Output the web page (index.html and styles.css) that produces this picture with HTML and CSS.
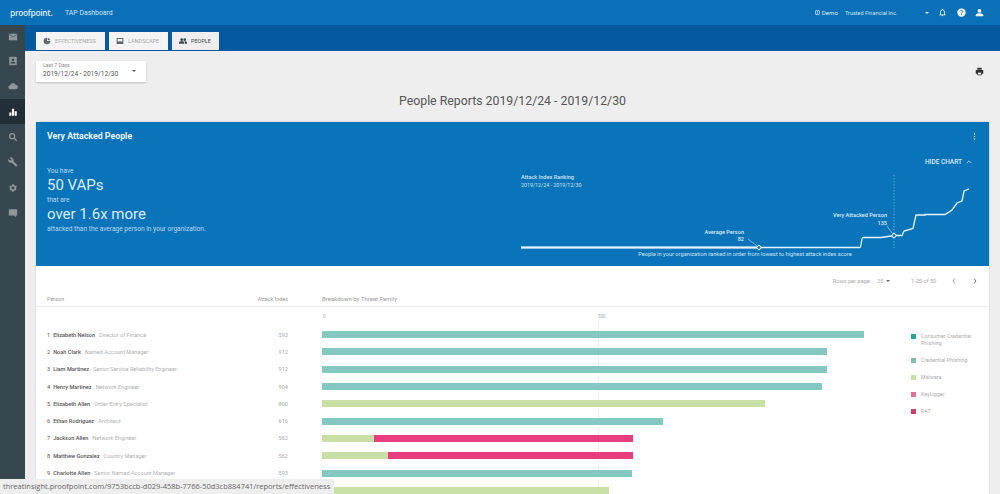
FILE: index.html
```html
<!DOCTYPE html>
<html lang="en">
<head>
<meta charset="utf-8">
<title>TAP Dashboard</title>
<link rel="stylesheet" href="styles.css">
</head>
<body>
<div class="app">
  <header class="topbar">
    <div class="brand">proofpoint<span class="dot">.</span></div>
    <div class="apptitle">TAP Dashboard</div>
    <div class="spacer"></div>
    <div class="demo">
      <svg class="demo-ico" viewBox="0 0 10 10"><rect x="1.5" y="1.5" width="7" height="7" fill="none" stroke="#fff" stroke-width="1.2"/><path d="M4 3h2M4 5h2M4 7h2" stroke="#fff"/></svg>
      Demo
    </div>
    <div class="org">Trusted Financial Inc.</div>
    <svg class="caret" viewBox="0 0 8 4"><path d="M0 0h8L4 4z" fill="#e6f0f8"/></svg>
    <svg class="tico bell" viewBox="0 0 24 24"><path d="M12 2a2 2 0 0 0-2 2v.6C7 5.500 6 8 6 11v5l-2 2v1h16v-1l-2-2v-5c0-3-1-5.500-4-6.400V4a2 2 0 0 0-2-2zm-4 15v-6c0-3 1.500-4.800 4-4.800s4 1.800 4 4.800v6zm2 3a2 2 0 0 0 4 0z" fill="#fff"/></svg>
    <svg class="tico help" viewBox="0 0 24 24"><circle cx="12" cy="12" r="11" fill="#fff"/><path d="M8.500 9.500a3.500 3.500 0 1 1 5.500 2.800c-1.200.9-2 1.400-2 3" fill="none" stroke="#0a70b8" stroke-width="2.400"/><rect x="10.800" y="16.500" width="2.400" height="2.400" fill="#0a70b8"/></svg>
    <svg class="tico user" viewBox="0 0 24 24"><circle cx="12" cy="7.500" r="5" fill="#fff"/><path d="M2 22v-3c0-3.500 6.500-5 10-5s10 1.500 10 5v3z" fill="#fff"/></svg>
  </header>
  <div class="body">
    <nav class="rail">
      <a class="rail-item"><svg viewBox="0 0 24 24"><path d="M2 4h20v16H2z" fill="#8d979c"/><path d="M3 6l9 6 9-6" fill="none" stroke="#37474f" stroke-width="1.600"/></svg></a>
      <a class="rail-item"><svg viewBox="0 0 24 24"><path d="M3 2h18v20H3z" fill="#8d979c"/><circle cx="12" cy="9" r="3.200" fill="#37474f"/><path d="M6 18c0-3 3-4 6-4s6 1 6 4z" fill="#37474f"/></svg></a>
      <a class="rail-item"><svg viewBox="0 0 24 24"><path d="M6 20a5 5 0 0 1-1-9.900A7 7 0 0 1 18 9a5.500 5.500 0 0 1 .5 11z" fill="#8d979c"/></svg></a>
      <a class="rail-item active"><svg viewBox="0 0 24 24"><path d="M3 13h5v8H3zM9.500 4h5v17h-5zM16 10h5v11h-5z" fill="#fff"/></svg></a>
      <a class="rail-item"><svg viewBox="0 0 24 24"><circle cx="10" cy="10" r="6" fill="none" stroke="#8d979c" stroke-width="3"/><path d="M14.500 14.500L21 21" stroke="#8d979c" stroke-width="3.200"/></svg></a>
      <a class="rail-item"><svg viewBox="0 0 24 24"><path d="M22 19l-9-9c1-2.500.4-5.300-1.700-7.300C9.200.6 6.200.3 3.800 1.400l4.300 4.300-3 3-4.400-4.300C-.4 6.800.1 9.900 2.200 12c2 2 4.800 2.600 7.200 1.600l9 9c.4.4 1 .4 1.400 0l2.200-2.200c.5-.4.5-1 0-1.400z" fill="#8d979c"/></svg></a>
      <a class="rail-item"><svg viewBox="0 0 24 24"><path d="M19.400 13a7.500 7.500 0 0 0 0-2l2.100-1.600-2-3.500-2.500 1a7.500 7.500 0 0 0-1.700-1L13.900 3.200h-4l-.4 2.700a7.500 7.500 0 0 0-1.700 1l-2.500-1-2 3.500L5.400 11a7.500 7.500 0 0 0 0 2l-2.100 1.600 2 3.500 2.500-1a7.500 7.500 0 0 0 1.700 1l.4 2.700h4l.4-2.700a7.500 7.500 0 0 0 1.700-1l2.500 1 2-3.500zM12 15.500a3.500 3.500 0 1 1 0-7 3.500 3.500 0 0 1 0 7z" fill="#8d979c"/></svg></a>
      <a class="rail-item"><svg viewBox="0 0 24 24"><path d="M2 3h20v15h-3v4l-4-4H2z" fill="#8d979c"/></svg></a>
    </nav>
    <main class="main">
      <div class="tabbar">
        <div class="tab"><svg viewBox="0 0 24 24"><path d="M12 2a10 10 0 1 0 10 10h-10z" fill="#5f6a70"/><path d="M14 2v8h8a10 10 0 0 0-8-8z" fill="#5f6a70"/></svg>EFFECTIVENESS</div>
        <div class="tab"><svg viewBox="0 0 24 24"><path d="M2 3h20v18H2z" fill="#5f6a70"/><path d="M5 6h14v7H5z" fill="#fff"/></svg>LANDSCAPE</div>
        <div class="tab current"><svg viewBox="0 0 24 24"><circle cx="8" cy="8" r="4" fill="#37474f"/><circle cx="17" cy="8" r="4" fill="#37474f"/><path d="M0 20v-3c0-2.500 5-4 8-4s8 1.500 8 4v3zM17.500 13c3 0 6.500 1.500 6.500 4v3h-6v-3c0-1.500-.5-3-2-3.800z" fill="#37474f"/></svg>PEOPLE</div>
      </div>
      <div class="content">
        <div class="filterrow">
          <div class="datecard">
            <div class="datelabel">Last 7 Days</div>
            <div class="datevalue">2019/12/24 - 2019/12/30</div>
            <svg class="datecaret" viewBox="0 0 8 4"><path d="M0 0h8L4 4z" fill="#555"/></svg>
          </div>
          <svg class="print" viewBox="0 0 24 24"><path d="M6 2h12v5H6zM2 8h20v10h-4v4H6v-4H2z" fill="#333"/><path d="M8 15h8v5H8z" fill="#eee"/></svg>
        </div>
        <h1 class="pagetitle">People Reports 2019/12/24 - 2019/12/30</h1>
        <section class="card">
          <div class="hero">
            <div class="herohead">
              <div class="herotitle">Very Attacked People</div>
              <svg class="more" viewBox="0 0 4 14"><circle cx="2" cy="2" r="1.300" fill="#fff"/><circle cx="2" cy="7" r="1.300" fill="#fff"/><circle cx="2" cy="12" r="1.300" fill="#fff"/></svg>
            </div>
            <div class="herobody">
              <div class="summary">
                <div class="sm">You have</div>
                <div class="big">50 VAPs</div>
                <div class="sm">that are</div>
                <div class="big">over 1.6x more</div>
                <div class="sm">attacked than the average person in your organization.</div>
              </div>
              <div class="chartwrap">
                <div class="hidechart">HIDE CHART <svg viewBox="0 0 10 6"><path d="M1 5l4-4 4 4" fill="none" stroke="#cfe3f2" stroke-width="1.300"/></svg></div>
                <div class="charthead"><b>Attack Index Ranking</b><span>2019/12/24 - 2019/12/30</span></div>
                <svg class="chart" viewBox="0 0 470 100">
                  <path d="M373 9V82" stroke="#5ea6d8" stroke-width="1" stroke-dasharray="1.500 1.500" fill="none"/>
                  <path d="M0 81.500H339c1.500 0 1-10 3-10H360L373 69.500H381L383 65 392 62.500 395 49H404V48.500H424L431 44 436 37 441 35 443 25 448 23" fill="none" stroke="#e8f4fb" stroke-width="1.300"/>
                  <path d="M0 81.500H238" fill="none" stroke="#e8f4fb" stroke-width="1.800"/>
                  <path d="M227 73l9 7M366 60l5 7" stroke="#a9d0ea" stroke-width=".7"/>
                  <circle cx="238" cy="81.500" r="2" fill="#0a74bb" stroke="#fff" stroke-width="1"/>
                  <circle cx="373" cy="69.500" r="2" fill="#0a74bb" stroke="#fff" stroke-width="1"/>
                  <text class="ct" x="223" y="67.500" text-anchor="end">Average Person</text>
                  <text class="ct" x="223" y="74.500" text-anchor="end">82</text>
                  <text class="ct" x="366" y="51" text-anchor="end">Very Attacked Person</text>
                  <text class="ct" x="366" y="59" text-anchor="end">135</text>
                </svg>
                <div class="chartcaption">People in your organization ranked in order from lowest to highest attack index score</div>
              </div>
            </div>
          </div>
          <div class="pager">
            <span>Rows per page:</span><span class="rpp">25 <svg viewBox="0 0 8 4"><path d="M0 0h8L4 4z" fill="#666"/></svg></span><span class="range">1-25 of 50</span>
            <svg class="pg" viewBox="0 0 8 12"><path d="M6 1L2 6l4 5" fill="none" stroke="#777" stroke-width="1.400"/></svg>
            <svg class="pg" viewBox="0 0 8 12"><path d="M2 1l4 5-4 5" fill="none" stroke="#333" stroke-width="1.400"/></svg>
          </div>
          <div class="thead">
            <div class="c-person">Person</div>
            <div class="c-index">Attack Index</div>
            <div class="c-break">Breakdown by Threat Family</div>
          </div>
          <div class="tbody">
            <div class="rows">
              <div class="axis"><span>0</span><span class="ax500">500</span></div>
              <div class="gridline"></div>
              <div class="row"><div class="c-person"><span class="n">1</span><b>Elizabeth Nelson</b><span class="job">Director of Finance</span></div><div class="c-index">593</div><div class="c-bar"><i class="teal" style="width:542px"></i></div></div>
              <div class="row"><div class="c-person"><span class="n">2</span><b>Noah Clark</b><span class="job">Named Account Manager</span></div><div class="c-index">912</div><div class="c-bar"><i class="teal" style="width:505px"></i></div></div>
              <div class="row"><div class="c-person"><span class="n">3</span><b>Liam Martinez</b><span class="job">Senior Service Reliability Engineer</span></div><div class="c-index">912</div><div class="c-bar"><i class="teal" style="width:505px"></i></div></div>
              <div class="row"><div class="c-person"><span class="n">4</span><b>Henry Martinez</b><span class="job">Network Engineer</span></div><div class="c-index">904</div><div class="c-bar"><i class="teal" style="width:500px"></i></div></div>
              <div class="row"><div class="c-person"><span class="n">5</span><b>Elizabeth Allen</b><span class="job">Order Entry Specialist</span></div><div class="c-index">800</div><div class="c-bar"><i class="green" style="width:443px"></i></div></div>
              <div class="row"><div class="c-person"><span class="n">6</span><b>Ethan Rodriguez</b><span class="job">Architect</span></div><div class="c-index">616</div><div class="c-bar"><i class="teal" style="width:341px"></i></div></div>
              <div class="row"><div class="c-person"><span class="n">7</span><b>Jackson Allen</b><span class="job">Network Engineer</span></div><div class="c-index">562</div><div class="c-bar"><i class="green" style="width:52px"></i><i class="pink" style="width:259px"></i></div></div>
              <div class="row"><div class="c-person"><span class="n">8</span><b>Matthew Gonzalez</b><span class="job">Country Manager</span></div><div class="c-index">562</div><div class="c-bar"><i class="green" style="width:66px"></i><i class="pink" style="width:245px"></i></div></div>
              <div class="row"><div class="c-person"><span class="n">9</span><b>Charlotte Allen</b><span class="job">Senior Named Account Manager</span></div><div class="c-index">593</div><div class="c-bar"><i class="teal" style="width:310px"></i></div></div>
              <div class="row"><div class="c-person"></div><div class="c-index"></div><div class="c-bar"><i class="green" style="width:287px"></i></div></div>
            </div>
            <aside class="legend">
              <div class="lg"><i class="s-cyan"></i><span>Consumer Credential Phishing</span></div>
              <div class="lg"><i class="s-teal"></i><span>Credential Phishing</span></div>
              <div class="lg"><i class="s-green"></i><span>Malware</span></div>
              <div class="lg"><i class="s-pink"></i><span>Keylogger</span></div>
              <div class="lg"><i class="s-rat"></i><span>RAT</span></div>
            </aside>
          </div>
        </section>
      </div>
    </main>
  </div>
  <div class="statuslink">threatinsight.proofpoint.com/9753bccb-d029-458b-7766-50d3cb884741/reports/effectiveness</div>
</div>
</body>
</html>
```
FILE: styles.css
```css
* { box-sizing: border-box; }
html, body { margin: 0; height: 100%; overflow: hidden; }
body { font-family: Roboto, "Liberation Sans", sans-serif; color: #333; background: #eee; }
.app { position: relative; width: 1000px; height: 494px; overflow: hidden; display: flex; flex-direction: column; }

.topbar { flex: 0 0 25px; height: 25px; background: #0a70b8; color: #fff; display: flex; align-items: center; padding-left: 10px; }
.brand { font-family: "Open Sans", sans-serif; font-size: 8.400px; font-weight: 600; color: #dcebf6; width: 55px; letter-spacing: -.3px; }
.dot { color: #dcebf6; }
.apptitle { font-size: 6.900px; color: #cfe3f2; }
.spacer { flex: 1; }
.demo { display: flex; align-items: center; gap: 2px; font-size: 6.200px; color: #dcebf6; }
.demo-ico { width: 5px; height: 5px; }
.org { margin-left: 7px; font-size: 5.500px; color: #cfe3f2; width: 80px; }
.caret { width: 4px; height: 2px; }
.tico { display: block; }
.bell { width: 9px; height: 9px; margin-left: 9px; }
.help { width: 9px; height: 9px; margin-left: 10px; }
.user { width: 9px; height: 9px; margin-left: 9px; margin-right: 16px; }

.body { flex: 1; display: flex; min-height: 0; }
.rail { flex: 0 0 25px; background: #37474f; display: flex; flex-direction: column; }
.rail-item { height: 25.300px; display: flex; align-items: center; justify-content: center; }
.rail-item:first-child { height: 23.500px; }
.rail-item svg { width: 10px; height: 10px; }
.rail-item.active { background: #232f36; }

.main { flex: 1; min-width: 0; display: flex; flex-direction: column; }
.tabbar { flex: 0 0 26px; height: 26px; background: #04599f; display: flex; align-items: flex-end; padding: 0 0 1px 11px; gap: 4px; }
.tab { height: 18px; background: #f4f4f4; display: flex; align-items: center; gap: 4px; padding: 0 7px; font-size: 5.500px; color: #aaa; }
.tab svg { width: 8px; height: 8px; }
.tab:nth-child(1) { width: 69px; }
.tab:nth-child(2) { width: 59px; }
.tab.current { width: 47px; background: #eee; color: #444; }

.content { flex: 1; min-height: 0; padding: 10px 0 0 11px; }
.filterrow { display: flex; justify-content: space-between; align-items: flex-start; height: 22px; }
.datecard { position: relative; width: 110px; height: 21px; background: #fff; padding: 2px 7px; box-shadow: 0 1px 2px rgba(0,0,0,.2); }
.datelabel { font-size: 5.200px; color: #888; line-height: 5px; }
.datevalue { font-size: 6.600px; color: #555; line-height: 9px; margin-top: 2px; }
.datecaret { position: absolute; right: 10px; top: 9px; width: 4px; height: 2px; }
.print { width: 9px; height: 9px; margin: 6px 16px 0 0; }
.pagetitle { margin: 11px 0 0; height: 28px; text-align: center; font-weight: 400; font-size: 12.300px; line-height: 15px; color: #555; width: 953px; }

.card { width: 953px; background: #fff; box-shadow: 0 0 2px rgba(0,0,0,.15); }
.hero { height: 144px; background: #0a74bb; color: #fff; padding: 8px 10px 0 11px; }
.herohead { display: flex; justify-content: space-between; align-items: center; height: 12px; }
.herotitle { font-size: 8.800px; font-weight: 700; color: #e8f3fb; }
.more { width: 3px; height: 7px; margin-right: 3px; }
.herobody { display: flex; }
.summary { width: 475px; padding-top: 25px; }
.sm { font-size: 6.600px; line-height: 8px; color: #b9d8ef; }
.big { font-size: 15px; line-height: 21px; color: #dcebf6; }
.chartwrap { position: relative; flex: 1; height: 122px; }
.hidechart { position: absolute; right: 7px; top: 16px; font-size: 6.500px; font-weight: 500; color: #dcebf6; display: flex; align-items: center; gap: 4px; }
.hidechart svg { width: 6px; height: 4px; }
.charthead { position: absolute; left: -1px; top: 31px; display: flex; flex-direction: column; font-size: 5.300px; line-height: 8px; color: #cfe3f2; }
.charthead b { font-weight: 500; font-size: 5.600px; }
.chart { position: absolute; left: -1px; top: 24px; width: 470px; height: 100px; }
.ct { font-size: 5.600px; fill: #dcebf6; font-family: Roboto, "Liberation Sans", sans-serif; font-weight: 500; }
.chartcaption { position: absolute; left: -1px; width: 448px; top: 108px; text-align: center; font-size: 5.700px; line-height: 8px; color: #cfe3f2; }

.pager { height: 30px; display: flex; justify-content: flex-end; align-items: center; font-size: 5.600px; color: #aaa; padding-right: 12px; }
.rpp { margin-left: 6px; display: flex; align-items: center; gap: 3px; width: 34px; }
.rpp svg { width: 4px; height: 2px; }
.range { width: 41px; }
.pg { width: 4px; height: 6px; }
.pg + .pg { margin-left: 17px; }

.thead { height: 11px; display: flex; font-size: 5.500px; line-height: 6px; color: #999; align-items: flex-start; border-bottom: 1px solid #eee; padding-left: 11px; }
.c-person { width: 207px; display: flex; gap: 3px; align-items: center; white-space: nowrap; }
.c-index { width: 34px; text-align: right; white-space: nowrap; }
.thead .c-break { margin-left: 34px; font-size: 6px; white-space: nowrap; }

.tbody { display: flex; }
.rows { position: relative; flex: 0 0 860px; padding-top: 19px; }
.axis { position: absolute; left: 287px; top: 7px; font-size: 4.500px; color: #aaa; width: 300px; }
.ax500 { position: absolute; left: 275px; }
.gridline { position: absolute; left: 562px; top: 14px; bottom: 0; border-left: 1px dotted #e4e4e4; }
.row { display: flex; align-items: center; height: 17.300px; padding-left: 11px; font-size: 5.600px; color: #aaa; }
.row b { font-weight: 500; color: #555; }
.n { color: #555; }
.job { color: #b0b0b0; margin-left: 1px; }
.row .c-index { color: #aaa; }
.c-bar { margin-left: 34px; display: flex; height: 7px; position: relative; }
.c-bar i { display: block; height: 7px; }
.teal { background: #84c8c1; }
.green { background: #c8e0a6; }
.pink { background: #e83e7e; }

.legend { padding: 26px 0 0 15px; width: 92px; }
.lg { display: flex; gap: 5px; font-size: 5.200px; line-height: 7px; color: #aaa; margin-bottom: 10px; letter-spacing: .1px; }
.lg i { flex: 0 0 5px; height: 5px; margin-top: 1px; }
.s-cyan { background: #26a69a; }
.s-teal { background: #80bfa8; }
.s-green { background: #c5e1a5; }
.s-pink { background: #e0709a; }
.s-rat { background: #c9406f; }

.statuslink { position: absolute; left: 0; bottom: 0; height: 15px; width: 334px; background: #eeeeee; font-family: "Open Sans", sans-serif; font-size: 7.500px; line-height: 15px; padding-left: 3px; color: #666; white-space: nowrap; overflow: hidden; }
```
